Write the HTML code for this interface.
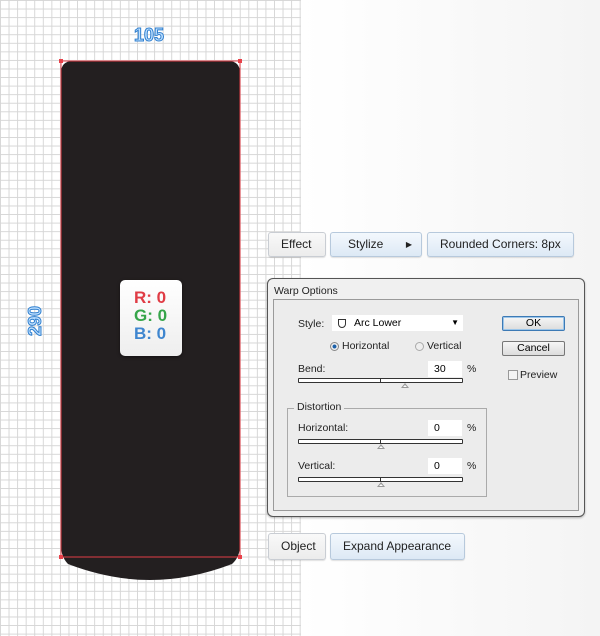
<!DOCTYPE html>
<html><head><style>
*{margin:0;padding:0;box-sizing:border-box}
body{width:600px;height:636px;position:relative;overflow:hidden;background:#f7f7f7;font-family:"Liberation Sans",sans-serif;}
.grid{position:absolute;left:0;top:0;width:301px;height:636px;background-color:#fff;
background-image:linear-gradient(to right,#d6d6d6 1px,transparent 1px),linear-gradient(to bottom,#d6d6d6 1px,transparent 1px);
background-size:8.57px 8.57px;background-position:0 0}
.bg2{position:absolute;left:301px;top:0;width:299px;height:636px;background:linear-gradient(to right,#fff,#f4f4f4)}
.a{position:absolute}
.btn{position:absolute;height:25px;border:1px solid #c9cdd3;border-radius:3px;font-size:12px;color:#222;line-height:23px;padding-left:12px;box-shadow:0 1px 1px rgba(0,0,0,.12)}
.g{background:linear-gradient(#f9f9f9,#ececec)}
.b{background:linear-gradient(#f3f8fd,#dde9f5);border-color:#b7c9dc}
.t{position:absolute;font-size:10.5px;color:#222}
.inp{position:absolute;background:#fff;height:16px;font-size:10.5px;padding-left:6px;line-height:16px}
.sl{position:absolute;height:5px;border:1px solid #333;background:#fff;border-radius:1px}
.tri{position:absolute;width:0;height:0;border-left:4px solid transparent;border-right:4px solid transparent;border-bottom:5px solid #999}
.tri:after{content:"";position:absolute;left:-2px;top:2px;border-left:2px solid transparent;border-right:2px solid transparent;border-bottom:2px solid #fff}
.dbtn{position:absolute;width:63px;height:15px;border:1px solid #777;border-radius:2px;background:linear-gradient(#f6f6f6,#dcdcdc);font-size:10.5px;text-align:center;line-height:13px}
.num{font-weight:bold;font-size:18px;-webkit-text-stroke:1px #2f7fcf;color:#bfe0ff}
.rgb{font-weight:bold;font-size:17px;line-height:18px}
</style></head><body>
<div class="grid"></div><div class="bg2"></div>
<svg class="a" style="left:0;top:0" width="301" height="636">
<path d="M61 73 Q61 61 73 61 L228 61 Q240 61 240 73 L240 545 Q240 557 232 564 Q190 580 150 580 Q110 580 68 564 Q61 557 61 545 Z" fill="#231f20"/>
<rect x="61" y="61" width="179" height="496" fill="none" stroke="#e23c46" stroke-width="1"/>
<rect x="59" y="59" width="4" height="4" fill="#e8414a"/><rect x="238" y="59" width="4" height="4" fill="#e8414a"/>
<rect x="59" y="555" width="4" height="4" fill="#e8414a"/><rect x="238" y="555" width="4" height="4" fill="#e8414a"/>
</svg>
<div class="a num" style="left:134px;top:25px">105</div>
<div class="a num" style="left:25px;top:336px;transform:rotate(-90deg);transform-origin:0 0">290</div>
<div class="a" style="left:120px;top:280px;width:62px;height:76px;background:linear-gradient(#fff,#eee);border-radius:5px;box-shadow:0 1px 3px rgba(0,0,0,.5);padding:9px 0 0 14px">
<div class="rgb" style="color:#e03c45">R: 0</div><div class="rgb" style="color:#36a54a">G: 0</div><div class="rgb" style="color:#3f86cf">B: 0</div></div>

<div class="btn g" style="left:268px;top:232px;width:58px">Effect</div>
<div class="btn b" style="left:330px;top:232px;width:92px;padding-left:17px">Stylize<span style="position:absolute;right:9px;font-size:8px">▶</span></div>
<div class="btn b" style="left:427px;top:232px;width:147px">Rounded Corners: 8px</div>
<div class="btn g" style="left:268px;top:533px;width:58px;height:27px;line-height:25px">Object</div>
<div class="btn b" style="left:330px;top:533px;width:135px;height:27px;line-height:25px">Expand Appearance</div>

<div class="a" style="left:267px;top:278px;width:318px;height:239px;border:1px solid #555;border-radius:6px;background:#f0f0f0;box-shadow:0 1px 2px rgba(0,0,0,.3)"></div>
<div class="t" style="left:274px;top:285px">Warp Options</div>
<div class="a" style="left:273px;top:299px;width:306px;height:212px;border:1px solid #9a9a9a;background:#ececec"></div>
<div class="t" style="left:298px;top:318px">Style:</div>
<div class="inp" style="left:332px;top:315px;width:131px;padding-left:22px">Arc Lower<span style="position:absolute;right:4px;font-size:8px">▼</span></div>
<div class="a" style="left:338px;top:319px;width:8px;height:9px;border:1px solid #333;border-radius:0 0 4px 4px"></div>
<div class="dbtn" style="left:502px;top:316px;border-color:#3d7ab5;box-shadow:inset 0 0 0 1px #9cc6ea">OK</div>
<div class="dbtn" style="left:502px;top:341px">Cancel</div>
<div class="a" style="left:330px;top:342px;width:9px;height:9px;border-radius:50%;border:1px solid #888;background:radial-gradient(#1a5fa8 35%,#eee 45%)"></div>
<div class="t" style="left:342px;top:340px">Horizontal</div>
<div class="a" style="left:415px;top:342px;width:9px;height:9px;border-radius:50%;border:1px solid #aaa;background:#eee"></div>
<div class="t" style="left:427px;top:340px">Vertical</div>
<div class="t" style="left:298px;top:363px">Bend:</div>
<div class="inp" style="left:428px;top:361px;width:34px">30</div><div class="t" style="left:467px;top:363px">%</div>
<div class="sl" style="left:298px;top:378px;width:165px"></div><div class="a" style="left:380px;top:378px;width:1px;height:5px;background:#333"></div>
<div class="tri" style="left:401px;top:383px"></div>
<div class="a" style="left:508px;top:370px;width:10px;height:10px;border:1px solid #999;background:#f4f4f4"></div>
<div class="t" style="left:520px;top:369px">Preview</div>
<div class="a" style="left:287px;top:408px;width:200px;height:89px;border:1px solid #aaa"></div>
<div class="t" style="left:294px;top:401px;background:#ececec;padding:0 3px">Distortion</div>
<div class="t" style="left:298px;top:422px">Horizontal:</div>
<div class="inp" style="left:428px;top:420px;width:34px">0</div><div class="t" style="left:467px;top:422px">%</div>
<div class="sl" style="left:298px;top:439px;width:165px"></div><div class="a" style="left:380px;top:439px;width:1px;height:5px;background:#333"></div>
<div class="tri" style="left:377px;top:444px"></div>
<div class="t" style="left:298px;top:460px">Vertical:</div>
<div class="inp" style="left:428px;top:458px;width:34px">0</div><div class="t" style="left:467px;top:460px">%</div>
<div class="sl" style="left:298px;top:477px;width:165px"></div><div class="a" style="left:380px;top:477px;width:1px;height:5px;background:#333"></div>
<div class="tri" style="left:377px;top:482px"></div>
</body></html>
